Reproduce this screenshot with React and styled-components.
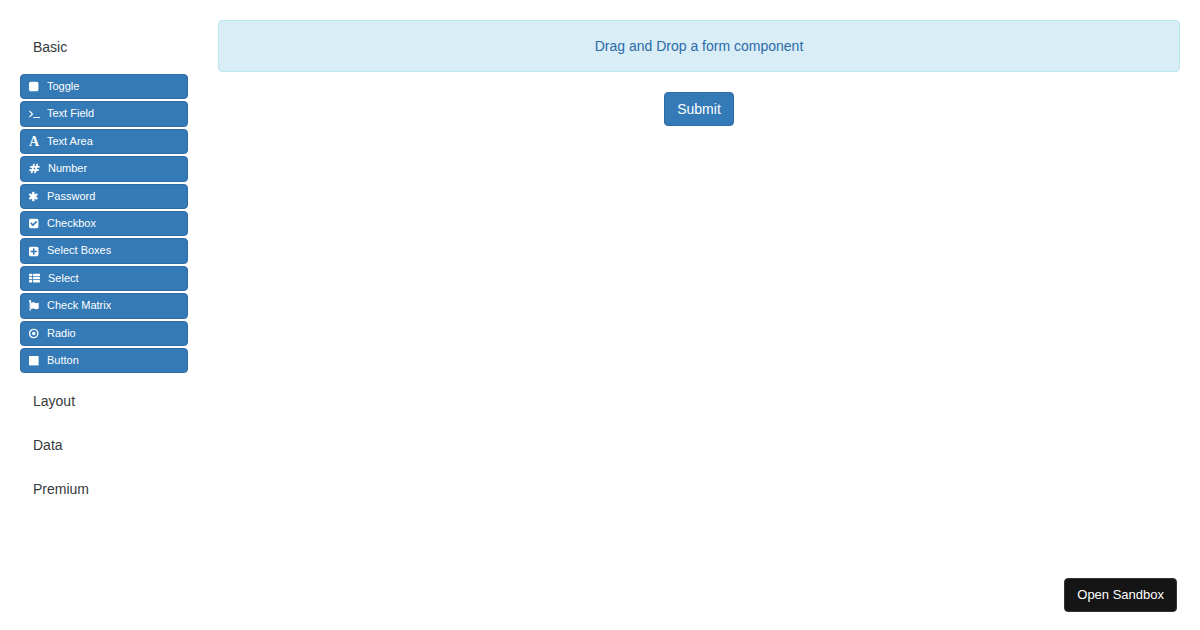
import React, { useState } from 'react';
import styled, { createGlobalStyle } from 'styled-components';

const GlobalStyle = createGlobalStyle`
  * {
    box-sizing: border-box;
  }
  body {
    margin: 0;
    background: #fff;
    color: #333;
    font-family: "Liberation Sans", Arial, sans-serif;
    font-size: 14px;
    line-height: 20px;
  }
  button {
    font-family: inherit;
    cursor: pointer;
  }
`;

// Drawn on an 11 unit grid
const Glyph = ({ children }) => (
  <svg viewBox="0 0 11 11" width="11" height="11" fill="currentColor">
    {children}
  </svg>
);

// Drawn on a 1792 unit grid
const Symbol = ({ d, left = 128 }) => (
  <svg viewBox={`${left} 0 1792 1792`} width="11" height="11" fill="currentColor">
    <path d={d} />
  </svg>
);

const box = 'v960q0 119-84.5 203.5t-203.5 84.5h-960q-119 0-203.5-84.5t-84.5-203.5v-960q0-119 84.5-203.5t203.5-84.5h960q119 0 203.5 84.5t84.5 203.5z';

const RoundedSquare = () => <Symbol d={`M1664 416${box}`} />;

const CheckSquare = () => (
  <Symbol d={`M813 1299l614-614q19-19 19-45t-19-45l-102-102q-19-19-45-19t-45 19l-467 467-211-211q-19-19-45-19t-45 19l-102 102q-19 19-19 45t19 45l358 358q19 19 45 19t45-19zm851-883${box}`} />
);

const PlusSquare = () => (
  <Symbol d={`M1408 960v-128q0-26-19-45t-45-19h-320v-320q0-26-19-45t-45-19h-128q-26 0-45 19t-19 45v320h-320q-26 0-45 19t-19 45v128q0 26 19 45t45 19h320v320q0 26 19 45t45 19h128q26 0 45-19t19-45v-320h320q26 0 45-19t19-45zm256-544${box}`} />
);

const Hash = () => (
  <Symbol left={0} d="M991 1024l64-256h-254l-64 256h254zm768-504l-56 224q-7 24-31 24h-327l-64 256h311q15 0 25 12 10 14 6 28l-56 224q-5 24-31 24h-327l-81 328q-7 24-31 24h-224q-16 0-26-12-9-12-6-28l78-312h-254l-81 328q-7 24-31 24h-225q-15 0-25-12-9-12-6-28l78-312h-311q-15 0-25-12-9-12-6-28l56-224q7-24 31-24h327l64-256h-311q-15 0-25-12-10-14-6-28l56-224q5-24 31-24h327l81-328q7-24 32-24h224q15 0 25 12 9 12 6 28l-78 312h254l81-328q7-24 32-24h224q15 0 25 12 9 12 6 28l-78 312h311q15 0 25 12 9 12 6 28z" />
);

const Asterisk = () => (
  <Symbol d="M1482 1050q46 26 59.5 77.5t-12.5 97.5l-64 110q-26 46-77.5 59.5t-97.5-12.5l-266-153v307q0 52-38 90t-90 38h-128q-52 0-90-38t-38-90v-307l-266 153q-46 26-97.5 12.5t-77.5-59.5l-64-110q-26-46-12.5-97.5t59.5-77.5l266-154-266-154q-46-26-59.5-77.5t12.5-97.5l64-110q26-46 77.5-59.5t97.5 12.5l266 153v-307q0-52 38-90t90-38h128q52 0 90 38t38 90v307l266-153q46-26 97.5-12.5t77.5 59.5l64 110q26 46 12.5 97.5t-59.5 77.5l-266 154z" />
);

const Square = () => (
  <Glyph>
    <rect x="0" y="1" width="9.6" height="9.4" />
  </Glyph>
);

const Prompt = () => (
  <Glyph>
    <path d="M0.5 2 L3.5 5 L0.5 8 M4.3 8.5 H10.8" fill="none" stroke="currentColor" strokeWidth="1.1" />
  </Glyph>
);

const List = () => (
  <Glyph>
    {[0.8, 3.9, 7].map((y) => (
      <g key={y}>
        <rect x="0" y={y} width="3.2" height="2.4" rx="0.4" />
        <rect x="4" y={y} width="7" height="2.4" rx="0.4" />
      </g>
    ))}
  </Glyph>
);

const Flag = () => (
  <Glyph>
    <circle cx="1.1" cy="1.2" r="1.2" />
    <path d="M0.6 1.5 H1.8 V10.8 H0.6 Z" />
    <path d="M1.8 3 C3.4 2.1 4.6 2.2 5.8 2.8 C7.1 3.4 8.2 3.2 9.7 2.6 V8.6 C8.2 9.3 7 9.4 5.8 8.9 C4.5 8.3 3.5 8.3 1.8 9.1 Z" />
  </Glyph>
);

const Target = () => (
  <Glyph>
    <circle cx="4.7" cy="5.5" r="4.1" fill="none" stroke="currentColor" strokeWidth="1.4" />
    <circle cx="4.7" cy="5.5" r="1.7" />
  </Glyph>
);

const Letter = () => <LetterIcon>A</LetterIcon>;

const basicComponents = [
  { label: 'Toggle', icon: RoundedSquare },
  { label: 'Text Field', icon: Prompt },
  { label: 'Text Area', icon: Letter },
  { label: 'Number', icon: Hash, wide: true },
  { label: 'Password', icon: Asterisk },
  { label: 'Checkbox', icon: CheckSquare },
  { label: 'Select Boxes', icon: PlusSquare },
  { label: 'Select', icon: List, wide: true },
  { label: 'Check Matrix', icon: Flag },
  { label: 'Radio', icon: Target },
  { label: 'Button', icon: Square },
];

const groups = [
  { title: 'Basic', items: basicComponents },
  { title: 'Layout', items: [] },
  { title: 'Data', items: [] },
  { title: 'Premium', items: [] },
];

const App = () => {
  const [open, setOpen] = useState('Basic');

  return (
    <>
      <GlobalStyle />
      <Builder>
        <Sidebar>
          {groups.map(({ title, items }) => (
            <section key={title}>
              <GroupButton
                type="button"
                aria-expanded={open === title}
                onClick={() => setOpen(title)}>
                {title}
              </GroupButton>
              {open === title && items.length > 0 && (
                <ComponentList>
                  {items.map(({ label, icon: Icon, wide }) => (
                    <li key={label}>
                      <ComponentButton type="button">
                        <IconSlot $wide={wide} aria-hidden="true">
                          <Icon />
                        </IconSlot>
                        {label}
                      </ComponentButton>
                    </li>
                  ))}
                </ComponentList>
              )}
            </section>
          ))}
        </Sidebar>
        <FormArea>
          <DropZone>Drag and Drop a form component</DropZone>
          <SubmitButton type="button">Submit</SubmitButton>
        </FormArea>
      </Builder>
      <SandboxButton type="button">Open Sandbox</SandboxButton>
    </>
  );
};

const Builder = styled.div`
  display: grid;
  grid-template-columns: minmax(168px, 14%) 1fr;
  gap: 30px;
  padding: 20px;
`;

const Sidebar = styled.aside`
  min-width: 0;
`;

const GroupButton = styled.button`
  display: block;
  width: 100%;
  padding: 12px 13px;
  border: 0;
  background: none;
  color: #373a3c;
  font-size: 14px;
  line-height: 20px;
  text-align: left;
  section:first-child > & {
    padding-top: 17px;
    padding-bottom: 17px;
  }
`;

const ComponentList = styled.ul`
  display: flex;
  flex-direction: column;
  gap: 2px;
  margin: 0 0 6px;
  padding: 0;
  list-style: none;
`;

const ComponentButton = styled.button`
  display: flex;
  align-items: center;
  width: 100%;
  padding: 4px 8px;
  border: 1px solid #2e6da4;
  border-radius: 4px;
  background: #337ab7;
  color: #fff;
  font-size: 11px;
  line-height: 1.4;
`;

const IconSlot = styled.span`
  display: flex;
  flex: none;
  width: ${({ $wide }) => ($wide ? '11px' : '10px')};
  margin-right: 8px;
  svg {
    flex: none;
  }
`;

const LetterIcon = styled.span`
  font-family: "Liberation Serif", "Times New Roman", serif;
  font-size: 14px;
  font-weight: bold;
  line-height: 11px;
`;

const FormArea = styled.main`
  display: flex;
  flex-direction: column;
  align-items: center;
  gap: 20px;
`;

const DropZone = styled.div`
  width: 100%;
  padding: 15px;
  border: 1px solid #bce8f1;
  border-radius: 4px;
  background: #d9edf7;
  color: #2b6ba8;
  text-align: center;
`;

const SubmitButton = styled.button`
  padding: 6px 12px;
  border: 1px solid #2e6da4;
  border-radius: 4px;
  background: #337ab7;
  color: #fff;
  font-size: 14px;
  line-height: 20px;
`;

// Stays in the corner while the page scrolls
const SandboxButton = styled.button`
  position: fixed;
  right: 23px;
  bottom: 18px;
  padding: 6px 12px;
  border: 1px solid #343434;
  border-radius: 4px;
  background: #151515;
  color: #fff;
  font-size: 13px;
  line-height: 20px;
`;

export default App;
